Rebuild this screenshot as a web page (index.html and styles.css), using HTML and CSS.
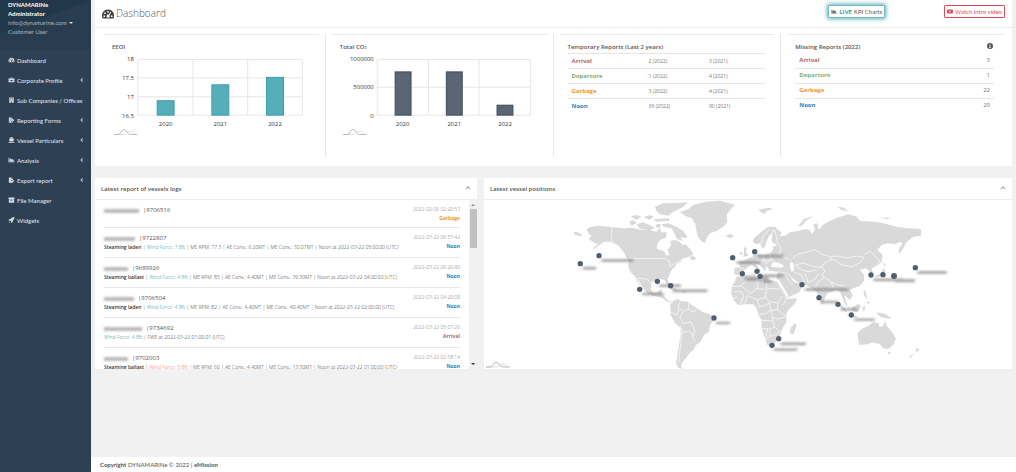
FILE: index.html
```
<!DOCTYPE html>
<html lang="en">
<head>
  <meta charset="UTF-8">
  <title>Dashboard</title>
  <link rel="stylesheet" href="styles.css">
</head>
<body>

  <!-- icons -->
  <svg class="sprite" aria-hidden="true">
    <symbol id="i-dash" viewBox="0 0 16 16"><path fill-rule="evenodd" d="M8 2a8 8 0 0 0-7 12h14A8 8 0 0 0 8 2zM7 4h2v2H7zM3 6h2v2H3zM2 10h2v2H2zM12 10h2v2h-2zM11 5l1 1-2 4a2 2 0 1 1-1-1z"/></symbol>
    <symbol id="i-case" viewBox="0 0 16 16"><path fill-rule="evenodd" d="M5 4V2h6v2h5v5h-6V8H6v1H0V4zM6 4h4V3H6zM0 10h6v1h4v-1h6v4H0z"/></symbol>
    <symbol id="i-building" viewBox="0 0 16 16"><path fill-rule="evenodd" d="M2 1h12v14H9v-3H7v3H2zM5 3v2h2V3zM9 3v2h2V3zM5 7v2h2V7zM9 7v2h2V7z"/></symbol>
    <symbol id="i-form" viewBox="0 0 16 16"><path fill-rule="evenodd" d="M1 1h7v4h4v2l-5 5v2h4v1H1zM9 1l3 3H9zM14 6l2 2-5 5H9v-2zM3 8h5V7H3zM3 11h3v-1H3z"/></symbol>
    <symbol id="i-ship" viewBox="0 0 16 16"><path d="M6 0h4v2h3v4l2 1-2 5H3L1 7l2-1V2h3zM5 4v1l3-1 3 1V4zM0 13h16v2H0z"/></symbol>
    <symbol id="i-chart" viewBox="0 0 16 16"><path d="M0 2h2v10h14v2H0zM3 11V6l3-3 3 4 2-2 3 3v3z"/></symbol>
    <symbol id="i-export" viewBox="0 0 16 16"><path fill-rule="evenodd" d="M1 1h7v4h4v3H7v3h5v4H1zM9 1l3 3H9zM8 9h4V7l4 3-4 3v-2H8z"/></symbol>
    <symbol id="i-archive" viewBox="0 0 16 16"><path fill-rule="evenodd" d="M0 1h16v4H0zM1 6h14v9H1zM5 8v1h6V8z"/></symbol>
    <symbol id="i-rocket" viewBox="0 0 16 16"><path d="M16 0c0 5-2 8-5 10v4l-4 2v-4L4 9H0l2-4h4c2-3 5-5 10-5zM3 11l2 2-4 2z"/></symbol>
    <symbol id="i-left" viewBox="0 0 8 16"><path d="M7 2v4L4 8l3 2v4L1 8z"/></symbol>
    <symbol id="i-up" viewBox="0 0 16 10"><path d="M2 8l6-6 6 6" fill="none" stroke="currentColor" stroke-width="3"/></symbol>
    <symbol id="i-play" viewBox="0 0 18 14"><path fill-rule="evenodd" d="M2 1h14l2 2v8l-2 2H2l-2-2V3zM7 4v6l5-3z"/></symbol>
    <symbol id="i-info" viewBox="0 0 16 16"><path fill-rule="evenodd" d="M8 0a8 8 0 1 0 0 16A8 8 0 0 0 8 0zM7 3h2v2H7zM6 6h3v5h1v2H6v-2h1V8H6z"/></symbol>
    <symbol id="i-amchart" viewBox="0 0 24 8"><path d="M0 6h10c3 0 3-3 5-3 1 0 1 1 2 0s2-1 4 3h3" fill="none" stroke="#ddd"/><path d="M0 6h4c4 0 3-5 6-5s3 5 7 5h6" fill="none" stroke="#bbb"/></symbol>
  </svg>

  <aside class="sidebar">
    <div class="profile">
      <strong>DYNAMARINe<br>Administrator</strong>
      <a href="#">info@dynamarine.com <span class="caret"></span></a>
      <p>Customer User</p>
    </div>
    <nav>
      <a href="#"><svg><use href="#i-dash"/></svg>Dashboard</a>
      <a href="#"><svg><use href="#i-case"/></svg>Corporate Profile<svg class="arrow"><use href="#i-left"/></svg></a>
      <a href="#"><svg><use href="#i-building"/></svg>Sub Companies / Offices</a>
      <a href="#"><svg><use href="#i-form"/></svg>Reporting Forms<svg class="arrow"><use href="#i-left"/></svg></a>
      <a href="#"><svg><use href="#i-ship"/></svg>Vessel Particulars<svg class="arrow"><use href="#i-left"/></svg></a>
      <a href="#"><svg><use href="#i-chart"/></svg>Analysis<svg class="arrow"><use href="#i-left"/></svg></a>
      <a href="#"><svg><use href="#i-export"/></svg>Export report<svg class="arrow"><use href="#i-left"/></svg></a>
      <a href="#"><svg><use href="#i-archive"/></svg>File Manager</a>
      <a href="#"><svg><use href="#i-rocket"/></svg>Widgets</a>
    </nav>
  </aside>

  <div class="page">
    <main>
      <section class="panel summary">
        <header class="title-bar">
          <h1><svg><use href="#i-dash"/></svg>Dashboard</h1>
          <button class="live"><svg><use href="#i-chart"/></svg><b>LIVE</b> KPI Charts</button>
          <button class="watch"><svg><use href="#i-play"/></svg>Watch intro video</button>
        </header>

        <div class="widgets">
          <div class="widget">
            <h2>EEOI</h2>
            <svg class="chart" viewBox="0 0 216 85">
              <path class="grid" d="M34 5.500h165.500v56H34zM34 24h165M34 43h165M89.500 5v56M144.500 5v56"/>
              <g class="teal">
                <rect x="53.500" y="47" width="17" height="14.500"/>
                <rect x="108.500" y="31" width="17" height="30.500"/>
                <rect x="163.500" y="23.500" width="17" height="38"/>
              </g>
              <g class="axis-y"><text x="30" y="7">18</text><text x="30" y="26">17.5</text><text x="30" y="45">17</text><text x="30" y="64">16.5</text></g>
              <g class="axis-x"><text x="62" y="72">2020</text><text x="117" y="72">2021</text><text x="172" y="72">2022</text></g>
              <use href="#i-amchart" x="10" y="75" width="24" height="8"/>
            </svg>
          </div>
          <div class="widget">
            <h2>Total CO<sub>2</sub></h2>
            <svg class="chart" viewBox="0 0 216 85">
              <path class="grid" d="M45.500 5.500h154v56h-154zM45 33.500h154M97 5v56M148 5v56"/>
              <g class="slate">
                <rect x="63.500" y="18" width="16" height="43.500"/>
                <rect x="115" y="18" width="16" height="43.500"/>
                <rect x="166" y="51.500" width="16" height="10"/>
              </g>
              <g class="axis-y"><text x="42" y="7">1000000</text><text x="42" y="35">500000</text><text x="42" y="64">0</text></g>
              <g class="axis-x"><text x="71" y="72">2020</text><text x="123" y="72">2021</text><text x="174" y="72">2022</text></g>
              <use href="#i-amchart" x="11" y="75" width="24" height="8"/>
            </svg>
          </div>
          <div class="widget">
            <h2>Temporary Reports (Last 2 years)</h2>
            <table class="temporary">
              <tr><th class="arrival">Arrival</th><td>2 (2022)</td><td>3 (2021)</td></tr>
              <tr><th class="departure">Departure</th><td>1 (2022)</td><td>4 (2021)</td></tr>
              <tr><th class="garbage">Garbage</th><td>3 (2022)</td><td>4 (2021)</td></tr>
              <tr><th class="noon">Noon</th><td>36 (2022)</td><td>90 (2021)</td></tr>
            </table>
          </div>
          <div class="widget">
            <h2>Missing Reports (2022)<svg class="info"><use href="#i-info"/></svg></h2>
            <table class="missing">
              <tr><th class="arrival">Arrival</th><td>3</td></tr>
              <tr><th class="departure">Departure</th><td>1</td></tr>
              <tr><th class="garbage">Garbage</th><td>22</td></tr>
              <tr><th class="noon">Noon</th><td>29</td></tr>
            </table>
          </div>
        </div>
      </section>

      <div class="columns">
        <section class="panel">
          <header class="panel-title"><h2>Latest report of vessels logs</h2><svg><use href="#i-up"/></svg></header>
          <div class="log-body">
            <ul class="logs">
              <li class="short">
                <div><h3><i class="hidden-name w35"></i>|9706516</h3></div>
                <div class="when"><time>2022-02-06 02:20:53</time><b class="garbage">Garbage</b></div>
              </li>
              <li>
                <div><h3><i class="hidden-name w31"></i>|9722807</h3><p><b>Steaming laden</b> | <span class="calm">Wind Force: 3 Bft</span> | ME RPM: 77.3 | AE Cons.: 6.20MT | ME Cons.: 30.07MT | Noon at 2022-03-22 05:00:00 (UTC)</p></div>
                <div class="when"><time>2022-03-22 06:57:42</time><b class="noon">Noon</b></div>
              </li>
              <li>
                <div><h3><i class="hidden-name w24"></i>|9689926</h3><p><b>Steaming ballast</b> | <span class="calm">Wind Force: 4 Bft</span> | ME RPM: 85 | AE Cons.: 4.40MT | ME Cons.: 39.30MT | Noon at 2022-03-22 04:00:00 (UTC)</p></div>
                <div class="when"><time>2022-03-22 06:20:40</time><b class="noon">Noon</b></div>
              </li>
              <li>
                <div><h3><i class="hidden-name w30"></i>|9706504</h3><p><b>Steaming laden</b> | <span class="calm">Wind Force: 4 Bft</span> | ME RPM: 82 | AE Cons.: 4.40MT | ME Cons.: 40.40MT | Noon at 2022-03-22 02:00:00 (UTC)</p></div>
                <div class="when"><time>2022-03-22 04:20:08</time><b class="noon">Noon</b></div>
              </li>
              <li>
                <div><h3><i class="hidden-name w38"></i>|9734692</h3><p><span class="calm">Wind Force: 4 Bft</span> | FWE at 2022-03-22 01:00:01 (UTC)</p></div>
                <div class="when"><time>2022-03-22 05:07:26</time><b class="arrival">Arrival</b></div>
              </li>
              <li>
                <div><h3><i class="hidden-name w24"></i>|9702003</h3><p><b>Steaming ballast</b> | <span class="windy">Wind Force: 5 Bft</span> | ME RPM: 60 | AE Cons.: 4.40MT | ME Cons.: 13.30MT | Noon at 2022-03-22 01:00:00 (UTC)</p></div>
                <div class="when"><time>2022-03-22 02:58:14</time><b class="noon">Noon</b></div>
              </li>
            </ul>
            <div class="scrollbar"><span class="up"></span><span class="thumb"></span><span class="down"></span></div>
          </div>
        </section>

        <section class="panel">
          <header class="panel-title"><h2>Latest vessel positions</h2><svg><use href="#i-up"/></svg></header>
          <svg class="map" viewBox="0 0 1584 507">
            <defs><filter id="soft" x="-20%" y="-100%" width="140%" height="300%"><feGaussianBlur stdDeviation="5 3"/></filter></defs>

            <!-- Americas -->
            <g transform="translate(228 -15)">
              <g class="land">
                <path d="M80 103L92 96 112 92 155 96 190 100 215 98 240 104 270 106 290 110 298 98 304 112 320 112 318 128 300 134 290 150 292 162 312 168 320 182 328 180 322 165 334 150 330 138 345 135 358 140 368 150 378 148 392 165 400 178 385 186 370 190 362 200 350 206 345 216 335 225 330 235 328 243 322 250 330 275 322 270 314 254 300 252 285 255 275 262 272 282 280 294 292 292 298 286 308 284 304 298 312 302 318 312 328 318 338 318 330 322 318 318 306 308 280 302 262 294 248 278 236 256 232 252 244 278 232 260 226 245 212 232 205 215 205 195 198 185 190 170 178 155 165 148 150 140 130 142 108 158 95 162 115 148 100 142 86 132 95 122 85 115z"/>
                <path d="M360 52L385 42 400 30 440 20 480 17 525 30 510 45 500 60 502 80 490 95 470 108 450 115 440 130 434 145 420 135 412 120 408 100 405 85 395 70 375 62z"/>
                <path d="M285 35L310 25 350 24 385 22 365 38 340 50 325 62 300 58 290 48zM305 88L325 85 350 95 370 108 382 125 375 130 362 125 368 138 350 132 345 118 335 100 310 95zM230 88L250 82 268 90 285 98 270 106 240 102zM208 80L220 76 230 84 215 92zM212 64L230 60 245 66 228 74zM252 66L270 60 282 66 268 74zM280 72L325 70 330 77 290 80zM290 88L302 86 300 98 286 96zM388 188L396 180 410 192 398 196zM42 110L52 112 68 120 58 124 42 118zM497 122L512 117 523 124 508 130zM320 276L345 280 358 288 335 284zM362 288L380 290 375 295z"/>
                <path d="M330 330L340 318 352 312 362 318 385 320 395 330 410 338 425 350 445 356 462 365 462 375 450 390 447 410 432 420 422 440 408 450 400 465 388 475 378 490 368 500 362 515 370 522 355 518 348 505 352 480 357 450 362 420 362 400 345 385 332 360 332 345z"/>
              </g>
              <path class="border" d="M155 96v43l22 14M205 190h108l15 8 2 16 25-14 16-10M230 250l30 2 15 12M360 320l-5 18 15 10-10 18 10 20 22-6 10 18 2 16-8 6 8 18M385 320l2 22-15 6M410 340l-8 12-15-8M362 392l4 18-4 35-6 60M365 412l22-3 14 12M332 352l20 8 5-20"/>
              <g class="masked"><rect x="68" y="215" width="40" height="9"/><rect x="125" y="192" width="95" height="9"/><rect x="298" y="268" width="65" height="8"/><rect x="338" y="283" width="104" height="9"/><rect x="246" y="293" width="65" height="8"/><rect x="468" y="380" width="42" height="8"/></g>
            </g>

            <!-- Europe, Africa, Asia, Oceania -->
            <g transform="translate(768 -75)">
              <g class="land">
                <path d="M48 208L38 200 42 190 62 172 85 155 105 155 115 165 125 172 118 182 135 182 150 172 175 168 195 162 210 165 215 178 225 165 220 148 232 145 236 165 248 150 265 140 290 128 325 118 350 125 360 138 400 140 430 145 470 155 500 160 543 162 543 182 520 185 500 200 490 220 478 238 476 222 488 205 480 200 465 208 445 205 425 210 412 225 428 240 425 260 408 275 395 278 398 292 392 300 386 285 375 280 360 285 372 300 372 318 360 332 340 340 330 345 338 362 330 375 318 365 312 360 318 380 325 395 315 388 308 370 300 350 292 342 280 348 262 355 255 370 246 390 238 372 230 350 215 340 200 330 180 328 165 315 150 302 160 320 175 325 188 332 180 350 160 360 140 370 128 350 118 325 110 310 112 290 88 287 80 272 75 290 68 280 58 270 45 265 62 285 60 292 45 278 35 270 25 275 15 285 5 298-10 300-18 295-16 278 0 276-2 262 10 258 25 250 38 245 42 228 48 238 70 240 90 235 100 222 98 215 112 210 100 204 94 196 98 180 92 176 84 188 78 204 74 216 66 220 60 205z"/>
                <path d="M-10 305L20 300 45 298 50 310 70 318 80 312 112 320 120 335 130 355 140 372 172 370 165 385 145 405 138 420 140 440 130 455 120 480 108 500 95 512 82 510 75 490 65 460 65 435 55 420 50 400 40 388 20 388-5 390-20 375-26 355-25 335-15 318z"/>
                <path d="M12 215L20 220 18 232 26 242 10 245 12 232zM2 230L8 232 4 240-2 238zM55 104L85 98 100 102 80 108 72 118zM175 152L192 132 220 122 198 138 184 154zM292 96L308 97 325 108 306 106zM420 127L455 129 440 133zM166 443L169 455 160 478 150 475 152 458zM352 475L365 462 385 452 400 442 415 445 418 455 428 455 435 438 442 455 455 470 468 490 460 510 445 522 430 520 420 508 400 502 380 508 358 510zM443 530L453 531 447 540zM530 517L538 524 526 533zM524 533L512 549 506 547zM292 380L310 395 322 412 312 408 298 392zM335 398L355 386 363 394 352 412 338 408zM408 412L422 414 435 416 455 430 440 430 420 425zM322 418L352 424 350 428 322 423zM428 262L438 270 434 275zM432 278L436 290 426 302 412 306 402 304 420 296zM370 350L376 346 382 372 374 364zM366 398L376 392 372 412zM380 378L390 382 384 388z"/>
              </g>
              <path class="water" d="M92 275l6-13 17 1 17 9-7 6zM150 262l10 3 3 20-8 5-5-12zM110 315l6-2 30 50-5 5z"/>
              <path class="border" d="M105 165l8 40 10 12-6 22 20 10 18 8M158 250l15-12 30-8 22-6 20 14 20 5 10 12-20 8-12 15-25-4-30-10-25 8M270 245l25-2 25 6 30-6 22 4-15 18-20 10-30-5-35-20M240 270l15 18-10 14 30 20 20 8 18 2 12 12M372 240l18-12 20 20 10 10-16 18M165 270l20 14 20 6 25-6M160 290l25 10 8 26M195 295l10 28 20-12 12-16M225 338l8-16 20-14M280 340l-6-18M112 290l25 4 15 8M120 310l15-10 20 28M50 240l4 18-20 10M70 240l4 20-16 6M90 236l5 18-20 12M55 258l40-4 14 8M-2 278l18 6M62 215l6-30 20-22M100 162l-4 16"/>
              <path class="border" d="M-25 335l28-2 20-20 2-12M3 333l30 22 20-15-3-28M80 314v26l40 2M50 340l30 4-4 24-24 6-30-12-8 26M-20 350h25l6 14-10 24M-22 370l14-4M76 368l14 12 24 4 12-20M52 374l6 22 20-6 14-8M88 382l4 22-14 12-22 2M114 384l-2 20-18 2M112 404l24 18M92 404l6 24 16 4 22-6M66 436l32 2v-10M98 438l6 18-14 6-24-2M82 460l-4 32M104 456l18 16M90 462v22l20-6 12-12M78 494l12-10M140 372l-12 18M2 375l10-8"/>
              <g class="masked"><rect x="50" y="239" width="80" height="9"/><rect x="-10" y="258" width="72" height="9"/><rect x="15" y="306" width="70" height="11"/><rect x="62" y="298" width="70" height="9"/><rect x="70" y="316" width="26" height="8"/><rect x="195" y="339" width="130" height="9"/><rect x="242" y="377" width="52" height="8"/><rect x="302" y="399" width="50" height="8"/><rect x="342" y="430" width="62" height="8"/><rect x="400" y="310" width="90" height="9"/><rect x="465" y="312" width="60" height="10"/><rect x="532" y="288" width="88" height="9"/><rect x="122" y="502" width="75" height="9"/><rect x="102" y="520" width="70" height="8"/></g>
            </g>

            <g class="pins">
              <circle cx="289" cy="191" r="8"/><circle cx="345" cy="167" r="8"/><circle cx="520" cy="244" r="8"/><circle cx="560" cy="257" r="8"/><circle cx="467" cy="268" r="8"/><circle cx="690" cy="354" r="8"/><circle cx="746" cy="173" r="8"/>
              <circle cx="812" cy="155" r="8"/><circle cx="775" cy="221" r="8"/><circle cx="819" cy="214" r="8"/><circle cx="828" cy="229" r="8"/><circle cx="954" cy="254" r="8"/><circle cx="1005" cy="293" r="8"/><circle cx="1062" cy="313" r="8"/><circle cx="1102" cy="345" r="8"/><circle cx="1161" cy="225" r="8"/><circle cx="1197" cy="224" r="8"/><circle cx="1230" cy="228" r="9"/><circle cx="1294" cy="203" r="8"/><circle cx="884" cy="416" r="8"/><circle cx="864" cy="436" r="8"/>
            </g>
            <use href="#i-amchart" x="6" y="483" width="72" height="24"/>
          </svg>
        </section>
      </div>
    </main>
    <footer><b>Copyright</b> DYNAMARINe © 2022 | <b>eMission</b></footer>
  </div>

</body>
</html>
```

FILE: styles.css
```
* {
  box-sizing: border-box;
}

body {
  margin: 0;
  min-height: 100vh;
  display: flex;
  background-color: #f1f1f1;
  color: #73879c;
  font-family: "Open Sans", "Noto Sans", sans-serif;
  font-size: 6px;
  line-height: 9px;
}

h1, h2, h3, p, ul {
  margin: 0;
  padding: 0;
  font-size: inherit;
}

a {
  color: inherit;
  text-decoration: none;
}

button {
  font: inherit;
  background-color: #fff;
  cursor: pointer;
}

svg {
  fill: currentColor;
}

.sprite {
  display: none;
}

.sidebar, .title-bar button, footer {
  font-family: Lato, "Open Sans", sans-serif;
}

/* sidebar */
.sidebar {
  flex: 0 0 91px;
  min-width: 0;
  background-color: #2d4054;
  color: #d5dce3;
}

.profile {
  height: 50px;
  padding: 0 8px;
  background: linear-gradient(160deg, #20384a 40%, #283d4f 41%);
}

.profile strong {
  display: block;
  color: #fff;
}

.profile a {
  display: block;
  color: #a9b6c2;
}

.profile p {
  color: #a9b6c2;
  line-height: 10px;
}

.caret {
  display: inline-block;
  margin-left: 1px;
  border: 2px solid transparent;
  border-top-color: #d5dce3;
  border-bottom: 0;
  vertical-align: middle;
}

.sidebar nav a {
  display: flex;
  align-items: center;
  gap: 2px;
  height: 20px;
  padding: 0 8px;
  font-weight: 600;
  white-space: nowrap;
}

.sidebar nav svg {
  flex: none;
  width: 7px;
  height: 6px;
}

.sidebar nav .arrow {
  width: 3px;
  height: 6px;
  margin-left: auto;
}

/* page */
.page {
  flex: 1;
  min-width: 0;
  display: flex;
  flex-direction: column;
}

main {
  flex: 1;
  padding: 0 4px;
}

.panel {
  background-color: #fff;
  overflow: hidden;
}

.title-bar {
  display: flex;
  align-items: center;
  height: 28px;
  padding: 0 7px;
  border-bottom: 1px solid #eee;
}

h1 {
  flex: 1;
  display: flex;
  align-items: center;
  gap: 2px;
  font-size: 10px;
  font-weight: 300;
  color: #555;
}

h1 svg {
  width: 12px;
  height: 12px;
  color: #444;
}

.title-bar button {
  display: flex;
  align-items: center;
  justify-content: center;
  gap: 2px;
  height: 13px;
  margin-bottom: 4px;
  padding: 0 2px;
  white-space: nowrap;
}

.title-bar button svg {
  width: 6px;
  height: 5px;
}

.live {
  margin-right: 59px;
  color: #555;
  border: 1px solid #74bcc5;
  border-radius: 1px;
  box-shadow: 0 0 4px 1px #56aeb9;
}

.live b {
  color: #2d9cab;
}

.watch {
  color: #dc4a58;
  border: 1px solid #dc4a58;
  border-radius: 1px;
}

.widgets {
  display: grid;
  grid-template-columns: repeat(4, 1fr);
  padding: 6px 3px 9px;
}

.widget {
  min-height: 123px;
  padding: 0 6px;
  border-right: 1px solid #e4e7ec;
  color: #777;
}

.widget:last-child {
  border-right: 0;
}

.widget h2 {
  display: flex;
  height: 19px;
  padding: 8px 10px 0 8px;
  border-top: 1px solid #eaeaea;
  font-weight: 600;
  color: #555;
}

.widget sub {
  font-size: 4px;
}

.info {
  width: 6px;
  height: 6px;
  margin-left: auto;
}

.chart {
  display: block;
  width: 100%;
  margin-top: 1px;
  color: #333;
}

.grid {
  fill: none;
  stroke: #e6e6e6;
}

.teal {
  fill: #56aeb9;
  stroke: #3c9cab;
}

.slate {
  fill: #5a6673;
  stroke: #3c4c5e;
}

.axis-y {
  text-anchor: end;
}

.axis-x {
  text-anchor: middle;
}

table {
  width: calc(100% - 17px);
  margin-left: 8px;
  border-collapse: collapse;
  table-layout: fixed;
}

th, td {
  height: 15px;
  padding: 0 4px;
  border-top: 1px solid #e5e5e5;
  text-align: left;
}

.temporary th {
  width: 39%;
}

.temporary td {
  font-size: 5px;
}

.missing tr:first-child > * {
  border-top: 0;
}

.missing td {
  text-align: right;
}

.arrival {
  color: #a8686c;
}

.departure {
  color: #78b07d;
}

.garbage {
  color: #f0951c;
}

.noon {
  color: #1c87bd;
}

/* lower panels */
.columns {
  display: grid;
  grid-template-columns: 382fr 528fr;
  gap: 7px;
  margin-top: 12px;
}

.panel-title {
  display: flex;
  align-items: center;
  justify-content: space-between;
  height: 22px;
  padding: 2px 6px 0;
  border-bottom: 1px solid #eee;
  color: #555;
}

.panel-title h2 {
  font-weight: 600;
}

.panel-title svg {
  width: 6px;
  height: 4px;
  margin-bottom: 4px;
  color: #aaa;
}

.log-body {
  display: flex;
  height: 169px;
}

.logs {
  flex: 1;
  list-style: none;
  padding: 0 9px;
}

.logs li {
  display: flex;
  justify-content: space-between;
  padding: 5px 0 6px;
  border-bottom: 1px solid #e6e6e6;
}

.logs .short {
  padding-bottom: 4px;
}

.logs h3 {
  display: flex;
  align-items: center;
  gap: 4px;
  height: 11px;
  font-weight: 400;
  color: #555;
}

.logs p {
  font-size: 5px;
  font-weight: 300;
  line-height: 7px;
  white-space: nowrap;
  color: #333;
}

.logs p b {
  font-weight: 600;
}

.hidden-name {
  height: 4px;
  background-color: #bbb;
  filter: blur(1px);
}

.w24 { width: 24px; }
.w30 { width: 30px; }
.w31 { width: 31px; }
.w35 { width: 35px; }
.w38 { width: 38px; }

.calm {
  color: #1f8da3;
}

.windy {
  color: #f06a48;
}

.when {
  display: flex;
  flex-direction: column;
  text-align: right;
  font-size: 5px;
}

.when time {
  font-weight: 300;
  color: #777;
}

.scrollbar {
  display: flex;
  flex-direction: column;
  align-items: center;
  width: 8px;
  padding: 4px 0;
  background-color: #f1f1f1;
}

.scrollbar .up {
  border: 2px solid transparent;
  border-top: 0;
  border-bottom-color: #888;
}

.scrollbar .thumb {
  width: 7px;
  height: 39px;
  margin-top: 3px;
  background-color: #c1c1c1;
}

.scrollbar .down {
  margin-top: auto;
  border: 2px solid transparent;
  border-bottom: 0;
  border-top-color: #333;
}

.map {
  display: block;
  width: 100%;
}

.land {
  fill: #d9d9d9;
}

.water {
  fill: #fff;
}

.border {
  fill: none;
  stroke: #fff;
  stroke-width: 2;
}

.masked {
  fill: #777;
  opacity: 0.6;
  filter: url(#soft);
}

.pins {
  fill: #4f5f70;
}

footer {
  padding: 3px 9px;
  background-color: #fff;
  color: #555;
}
```
